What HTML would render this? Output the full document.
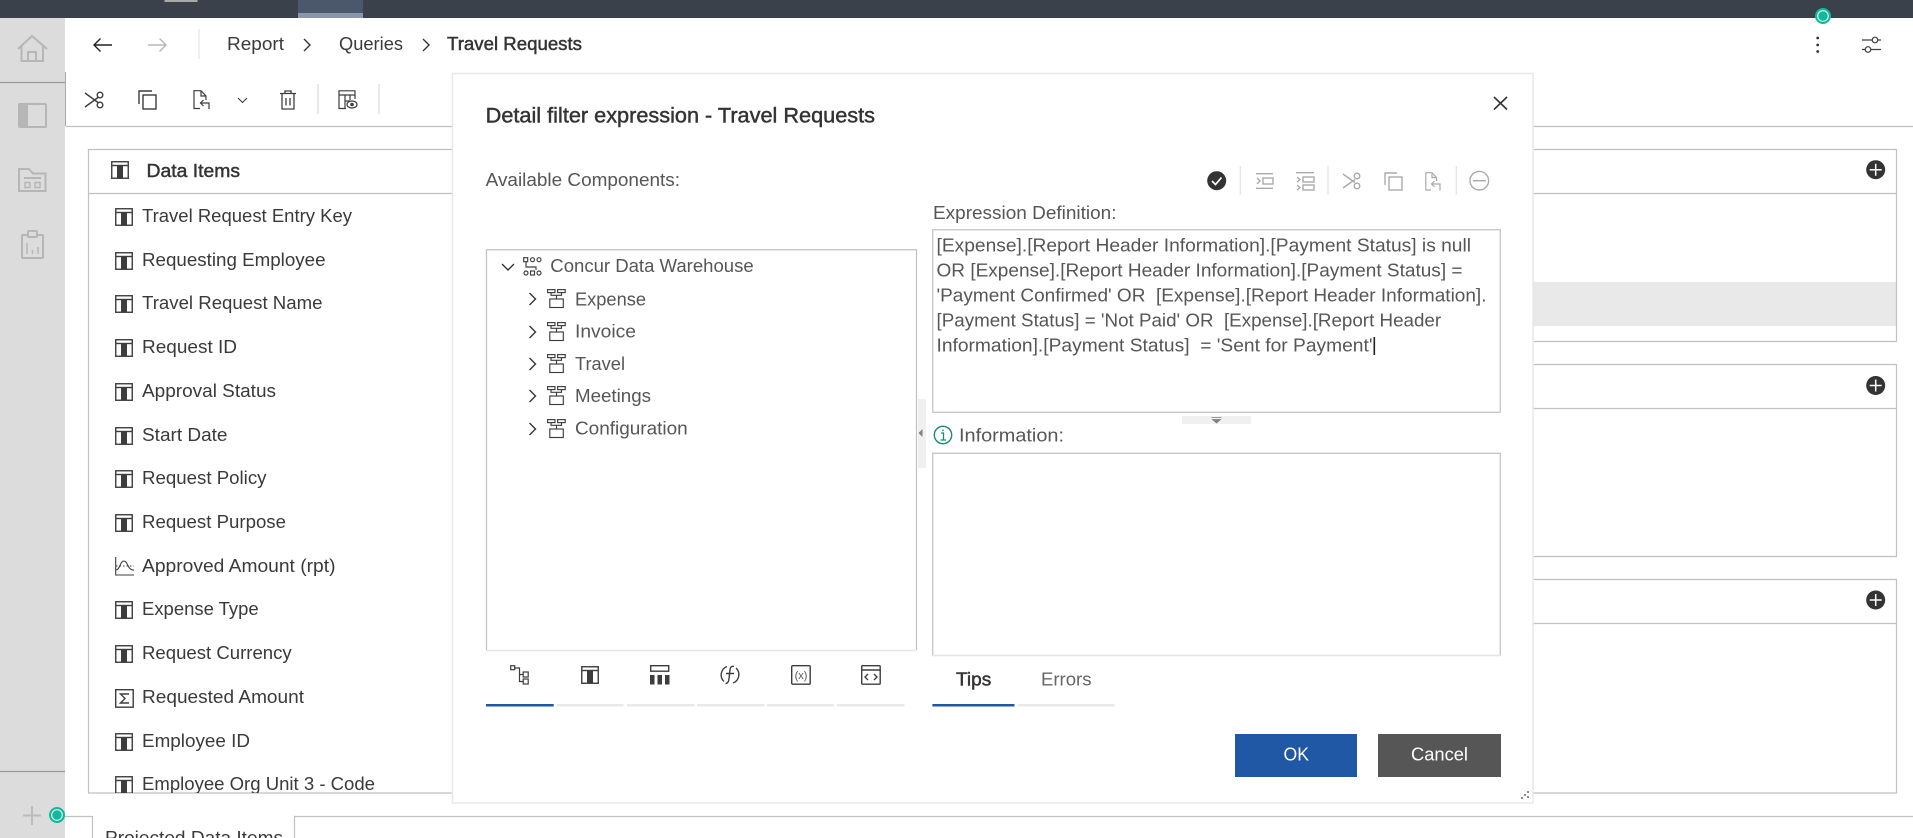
<!DOCTYPE html>
<html lang="en">
<head>
<meta charset="utf-8">
<title>Detail filter expression - Travel Requests</title>
<style>
html,body{margin:0;padding:0;background:#fff;width:1913px;height:838px;overflow:hidden}
svg{display:block}
text{font-family:"Liberation Sans",sans-serif;font-size:18px;white-space:pre}
.d{fill:#3a3a3a}
.g{fill:#565656}
.m{fill:#333;stroke:#333;stroke-width:.45px}
.s{fill:none;stroke:#3d3d3d;stroke-width:1.4}
.l{fill:none;stroke:#aaa;stroke-width:1.4}
.sb{fill:none;stroke:#b6b6b6;stroke-width:2}
</style>
</head>
<body>
<svg width="1913" height="838" viewBox="0 0 1913 838" xmlns="http://www.w3.org/2000/svg">
<defs>
<g id="tbl"><rect x=".75" y=".75" width="16.5" height="16.5" class="s"/><path d="M1 4.5H17" class="s"/><rect x="6" y="4.5" width="6" height="13" fill="#3d3d3d"/></g>
<g id="sub" class="s" style="stroke-width:1.15"><rect x=".6" y=".6" width="7.4" height="3"/><rect x="10.600" y=".6" width="7.6" height="3"/><path d="M4 3.600V6.300H14.500V3.600M9.500 6.300V10"/><rect x="2.800" y="10" width="13.500" height="8.500"/></g>
<g id="chev"><path d="M1 1L7 7 1 13" fill="none" stroke="#333" stroke-width="1.4"/></g>
<g id="plus"><circle cx="0" cy="0" r="9.5" fill="#333"/><path d="M-6 0H6M0-6V6" stroke="#fff" stroke-width="1.5"/></g>
</defs>

<!-- top bar -->
<rect x="0" y="0" width="1913" height="18" fill="#3a414b"/>
<rect x="298" y="0" width="65" height="13" fill="#4b576b"/>
<rect x="298" y="13" width="65" height="5" fill="#8a97ab"/>
<rect x="164.500" y="0" width="33" height="2" fill="#a9a9a9"/>

<!-- sidebar -->
<rect x="0" y="18" width="65" height="820" fill="#dcdcdc"/>
<path d="M0 82.500H65" stroke="#9a9a9a" stroke-width="1.200"/>
<path d="M0 771.500H65" stroke="#9a9a9a" stroke-width="1.200"/>
<path d="M65.500 72V126" stroke="#aaa" stroke-width="1"/>
<g class="sb">
<path d="M18 49L32 36 47 49M21.500 46V61H43V46M28 61V52H36V61"/>
<rect x="19" y="104" width="27" height="23" rx="1"/>
<path d="M19 191V169H29L33 173.500H45.500V191ZM24 178H41"/>
<path d="M25 182.500h5v5h-5zM35 182.500h5v5h-5z" style="stroke-width:1.5"/>
<rect x="22" y="235" width="21" height="23" rx="1"/>
<rect x="28" y="231" width="9" height="6" rx="1" fill="#dcdcdc"/>
<path d="M27 243V254M32.500 250V254M38 247V254" style="stroke-width:1.5"/>
</g>
<rect x="19" y="104" width="9" height="23" fill="#b6b6b6"/>
<path d="M23 815.500H41M32 806V825" stroke="#bcbcbc" stroke-width="2"/>

<!-- nav -->
<path d="M112 45H94M100.500 38.500L94 45 100.500 51.500" fill="none" stroke="#222" stroke-width="1.400"/>
<path d="M148 45H166M159.500 38.500L166 45 159.500 51.500" fill="none" stroke="#b5b5b5" stroke-width="1.400"/>
<path d="M199 29V59" stroke="#e4e4e4" stroke-width="1.200"/>
<text x="227" y="50" textLength="57" lengthAdjust="spacingAndGlyphs" class="d">Report</text>
<use href="#chev" x="303" y="38"/>
<text x="339" y="50" textLength="64" lengthAdjust="spacingAndGlyphs" class="d">Queries</text>
<use href="#chev" x="422" y="38"/>
<text x="447" y="50" textLength="135" lengthAdjust="spacingAndGlyphs" class="m">Travel Requests</text>

<circle cx="1817.700" cy="38" r="1.400" fill="#333"/><circle cx="1817.700" cy="45" r="1.400" fill="#333"/><circle cx="1817.700" cy="51.500" r="1.400" fill="#333"/>
<g class="s" style="stroke-width:1.200"><path d="M1862 40H1872M1878 40H1881M1862 49.500H1865M1871 49.500H1881"/><circle cx="1875" cy="40" r="2.800"/><circle cx="1868" cy="49.500" r="2.800"/></g>

<!-- toolbar -->
<g class="s" transform="translate(85,92)"><path d="M0 1L13 10.500M0 15L13 5.500"/><circle cx="15" cy="3" r="2.800"/><circle cx="15" cy="13" r="2.800"/></g>
<g class="s" transform="translate(138,90)"><path d="M1 14V1H14"/><rect x="5" y="5" width="13" height="14"/></g>
<g class="s" style="stroke-width:1.2" transform="translate(193,90)"><path d="M7 18.500H1V.7H8L13 6V10M8 1V6H13"/><path d="M16 19V13H7.500M10.500 10L7.500 13 10.500 16"/></g>
<path d="M238 98L242.500 102.500 247 98" class="s" style="stroke-width:1.100"/>
<g class="s" style="stroke-width:1.300" transform="translate(280,90)"><path d="M0 3.500H16M5 3.500V1H11V3.500"/><path d="M2 3.500V19H14V3.500M6 8V15.500M10 8V15.500"/></g>
<path d="M318 84V114M379 84V114" stroke="#e2e2e2" stroke-width="1.500"/>
<g class="s" style="stroke-width:1.200" transform="translate(338,90)"><path d="M8 18.500H1V.8H17V9M1 5H17M7 5V18.500M7 11H12M12 5V10"/><ellipse cx="14" cy="14.500" rx="5" ry="3.500"/><circle cx="14" cy="14.500" r="1.200" fill="#3d3d3d"/></g>
<path d="M66 126.500H1913" stroke="#c0c0c0" stroke-width="1.200"/>

<!-- left panel -->
<path d="M88.500 793V149.500H460M88.500 193.500H460M88 793H460" stroke="#c0c0c0" stroke-width="1.200" fill="none"/>
<use href="#tbl" x="111" y="161"/>
<text x="146.500" y="177" textLength="93.500" lengthAdjust="spacingAndGlyphs" class="m">Data Items</text>

<use href="#tbl" x="115" y="208"/><text x="142" y="222" textLength="210" lengthAdjust="spacingAndGlyphs" class="d">Travel Request Entry Key</text>
<use href="#tbl" x="115" y="252"/><text x="142" y="266" textLength="183.500" lengthAdjust="spacingAndGlyphs" class="d">Requesting Employee</text>
<use href="#tbl" x="115" y="295"/><text x="142" y="309" textLength="180.500" lengthAdjust="spacingAndGlyphs" class="d">Travel Request Name</text>
<use href="#tbl" x="115" y="339"/><text x="142" y="353" textLength="95" lengthAdjust="spacingAndGlyphs" class="d">Request ID</text>
<use href="#tbl" x="115" y="383"/><text x="142" y="397" textLength="134" lengthAdjust="spacingAndGlyphs" class="d">Approval Status</text>
<use href="#tbl" x="115" y="427"/><text x="142" y="441" textLength="85.500" lengthAdjust="spacingAndGlyphs" class="d">Start Date</text>
<use href="#tbl" x="115" y="470"/><text x="142" y="484" textLength="124.500" lengthAdjust="spacingAndGlyphs" class="d">Request Policy</text>
<use href="#tbl" x="115" y="514"/><text x="142" y="528" textLength="144" lengthAdjust="spacingAndGlyphs" class="d">Request Purpose</text>
<g class="s" style="stroke-width:1.100" transform="translate(115,557)"><path d="M.7 0V18H19"/><path d="M1 13C5 13 5 4 9 4S12 13 19 13"/><path d="M1 9H19" stroke-dasharray="1.500 2"/></g>
<text x="142" y="572" textLength="193.500" lengthAdjust="spacingAndGlyphs" class="d">Approved Amount (rpt)</text>
<use href="#tbl" x="115" y="601"/><text x="142" y="615" textLength="116.700" lengthAdjust="spacingAndGlyphs" class="d">Expense Type</text>
<use href="#tbl" x="115" y="645"/><text x="142" y="659" textLength="149.700" lengthAdjust="spacingAndGlyphs" class="d">Request Currency</text>
<g class="s" transform="translate(115,689)"><rect x=".7" y=".7" width="17.500" height="17.500"/><path d="M14 5H5.500L10 9.500 5.500 14H14"/></g>
<text x="142" y="703" textLength="162" lengthAdjust="spacingAndGlyphs" class="d">Requested Amount</text>
<use href="#tbl" x="115" y="733"/><text x="142" y="747" textLength="108" lengthAdjust="spacingAndGlyphs" class="d">Employee ID</text>
<svg x="100" y="760" width="350" height="33" viewBox="100 760 350 33"><use href="#tbl" x="115" y="776"/><text x="142" y="790" textLength="233" lengthAdjust="spacingAndGlyphs" class="d">Employee Org Unit 3 - Code</text></svg>

<!-- right panels -->
<rect x="1530" y="282" width="366" height="44" fill="#e9e9e9"/>
<g fill="none" stroke="#c0c0c0" stroke-width="1.200">
<path d="M1530 149.500H1896.500V341.500H1530M1530 193.500H1896.500"/>
<path d="M1530 364.500H1896.500V556.500H1530M1530 408.500H1896.500"/>
<path d="M1530 579.500H1896.500V793H1530M1530 623.500H1896.500"/>
</g>
<use href="#plus" x="1875.700" y="169.700"/>
<use href="#plus" x="1875.700" y="385.500"/>
<use href="#plus" x="1875.700" y="600"/>

<!-- bottom tab -->
<path d="M65 816.500H92.500V838M294.500 838V816.500H1913" fill="none" stroke="#c0c0c0" stroke-width="1.200"/>
<text x="105" y="844" textLength="178" lengthAdjust="spacingAndGlyphs" class="d">Projected Data Items</text>

<!-- green dots -->
<circle cx="1823" cy="16" r="8" fill="#10b99b"/><circle cx="1823" cy="16" r="5.300" fill="#10b99b" stroke="#d7f3ec" stroke-width="1.200"/>
<circle cx="57" cy="815" r="8" fill="#10b99b"/><circle cx="57" cy="815" r="5.300" fill="#10b99b" stroke="#d7f3ec" stroke-width="1.200"/>

<!-- modal -->
<rect x="452.500" y="73.500" width="1080.500" height="729.500" fill="#fff" stroke="#e8e8e8" stroke-width="1.500"/>
<text x="485.700" y="122.700" textLength="389.300" lengthAdjust="spacingAndGlyphs" style="font-size:21px" class="m">Detail filter expression - Travel Requests</text>
<path d="M1494 97L1507 109.500M1507 97L1494 109.500" stroke="#333" stroke-width="1.600"/>
<text x="485.700" y="186" textLength="194.300" lengthAdjust="spacingAndGlyphs" class="g">Available Components:</text>

<!-- modal toolbar -->
<circle cx="1216.700" cy="180.700" r="9.500" fill="#333"/>
<path d="M1212 181L1215.500 184.500 1221.500 177.500" fill="none" stroke="#fff" stroke-width="1.700"/>
<path d="M1240.300 166V195M1328 166V195M1456.300 166V195" stroke="#e3e3e3" stroke-width="1.200"/>
<g class="l" transform="translate(1256,173)"><path d="M0 .7H17M0 15.300H17"/><rect x="7" y="5" width="10" height="6"/><path d="M1 5L4 8 1 11"/></g>
<g class="l" transform="translate(1296,172)"><path d="M0 .7H18"/><rect x="7" y="5" width="11" height="5"/><rect x="7" y="13" width="11" height="5"/><path d="M1 5L4 7.500 1 10M1 13L4 15.500 1 18"/></g>
<g class="l" transform="translate(1343,173)"><path d="M0 1L12 9.500M0 15L12 6.500"/><circle cx="14" cy="3" r="2.800"/><circle cx="14" cy="13" r="2.800"/></g>
<g class="l" transform="translate(1384,172)"><path d="M1 13V1H13"/><rect x="5" y="5" width="13" height="13"/></g>
<g class="l" style="stroke-width:1.200" transform="translate(1425,172)"><path d="M6 18H.8V.7H7L11.500 5.500V9M7 1V5.500H11.500"/><path d="M15 18.500V12H6.500M9.500 9L6.500 12 9.500 15"/></g>
<circle cx="1479.300" cy="180.700" r="9.300" class="l"/><path d="M1473 180.700H1486" class="l"/>

<!-- tree -->
<path d="M486.500 650V249.750H916.500V650" fill="none" stroke="#c0c0c0" stroke-width="1.200"/>
<path d="M486 650.500H917" stroke="#e6e6e6" stroke-width="1.500"/>
<path d="M502 264L508 270 514 264" fill="none" stroke="#333" stroke-width="1.400"/>
<g class="s" style="stroke-width:1.150" transform="translate(523,257)"><rect x=".7" y=".7" width="4" height="4"/><circle cx="9.500" cy="2.700" r="2"/><circle cx="16" cy="2.700" r="2"/><path d="M3 5V10H13V13"/><circle cx="3" cy="16" r="2"/><rect x="7.500" y="14" width="4" height="4"/><circle cx="16" cy="16" r="2"/></g>
<text x="550.300" y="272" textLength="203.400" lengthAdjust="spacingAndGlyphs" class="g">Concur Data Warehouse</text>
<use href="#chev" x="528.500" y="292"/><use href="#sub" x="547" y="289"/><text x="575" y="305.300" textLength="71" lengthAdjust="spacingAndGlyphs" class="g">Expense</text>
<use href="#chev" x="528.500" y="325"/><use href="#sub" x="547" y="322"/><text x="575" y="337.300" textLength="61" lengthAdjust="spacingAndGlyphs" class="g">Invoice</text>
<use href="#chev" x="528.500" y="357"/><use href="#sub" x="547" y="354"/><text x="575" y="370" textLength="50" lengthAdjust="spacingAndGlyphs" class="g">Travel</text>
<use href="#chev" x="528.500" y="389"/><use href="#sub" x="547" y="386"/><text x="575" y="402" textLength="76" lengthAdjust="spacingAndGlyphs" class="g">Meetings</text>
<use href="#chev" x="528.500" y="422"/><use href="#sub" x="547" y="419"/><text x="575" y="434.300" textLength="112.700" lengthAdjust="spacingAndGlyphs" class="g">Configuration</text>

<!-- vertical splitter -->
<rect x="918" y="399" width="8" height="69" fill="#f0f0f0"/>
<path d="M922.500 429V437L918.500 433Z" fill="#808080"/>

<!-- expression -->
<text x="933" y="219" textLength="183.500" lengthAdjust="spacingAndGlyphs" class="g">Expression Definition:</text>
<rect x="932.750" y="229.750" width="567.500" height="182.500" fill="#fff" stroke="#c0c0c0" stroke-width="1.200"/>
<text x="936.500" y="251.700" textLength="534.500" lengthAdjust="spacingAndGlyphs" class="g">[Expense].[Report Header Information].[Payment Status] is null</text>
<text x="936.500" y="276.700" textLength="526" lengthAdjust="spacingAndGlyphs" class="g">OR [Expense].[Report Header Information].[Payment Status] =</text>
<text x="936.500" y="301.700" textLength="550" lengthAdjust="spacingAndGlyphs" class="g">'Payment Confirmed' OR  [Expense].[Report Header Information].</text>
<text x="936.500" y="326.700" textLength="504.600" lengthAdjust="spacingAndGlyphs" class="g">[Payment Status] = 'Not Paid' OR  [Expense].[Report Header</text>
<text x="936.500" y="351.700" textLength="436" lengthAdjust="spacingAndGlyphs" class="g">Information].[Payment Status]  = 'Sent for Payment'</text>
<rect x="1373.500" y="337" width="1.600" height="18" fill="#222"/>

<!-- horizontal splitter -->
<rect x="1182" y="416" width="69" height="8" fill="#f0f0f0"/>
<path d="M1211.500 417.500H1221.500M1212.500 419.500H1220.500L1216.500 423Z" fill="#808080" stroke="#808080" stroke-width=".8"/>

<!-- info -->
<circle cx="943" cy="435" r="8.700" fill="none" stroke="#1a8a6d" stroke-width="1.400"/>
<path d="M941 433H943.500V440M940.500 440H946M943 429.500V431.300" fill="none" stroke="#1a8a6d" stroke-width="1.300"/>
<text x="959" y="441.700" textLength="105" lengthAdjust="spacingAndGlyphs" class="g">Information:</text>
<path d="M932.750 655V453.250H1500.250V655" fill="none" stroke="#c0c0c0" stroke-width="1.200"/>
<path d="M932 655.500H1501" stroke="#e6e6e6" stroke-width="1.500"/>

<!-- left tabs -->
<g class="s" style="stroke-width:1.200" transform="translate(510,665)"><rect x=".7" y=".7" width="4" height="4"/><path d="M5 3H9.500V16.500H13M9.500 9.500H13"/><rect x="13.200" y="7" width="5" height="5"/><rect x="13.200" y="14" width="5" height="5"/></g>
<use href="#tbl" x="581" y="666"/>
<g transform="translate(650,665)"><rect x=".7" y=".7" width="18" height="5.500" fill="none" stroke="#3d3d3d" stroke-width="1.400"/><rect x="0" y="10" width="4.500" height="9.500" fill="#3d3d3d"/><rect x="7.500" y="10" width="4.500" height="9.500" fill="#3d3d3d"/><rect x="15" y="10" width="4.500" height="9.500" fill="#3d3d3d"/></g>
<g class="s" style="stroke-width:1.400" transform="translate(720,665)"><path d="M7 1.500A9 9 0 0 0 4 16.500"/><path d="M13 18A9 9 0 0 0 16 3"/><path d="M14 1.500C10 .5 10 4 9.500 9S9 18.500 5.500 18.500M6 8.500H14"/></g>
<g transform="translate(791,665)"><rect x=".7" y=".7" width="18.500" height="18.500" rx="1" class="s"/><text x="10" y="14" text-anchor="middle" style="font-size:11px" class="g">(x)</text></g>
<g class="s" transform="translate(861,665)"><rect x=".7" y=".7" width="18.500" height="18.500" rx="1"/><path d="M1 5H19M7 9L4 12 7 15M13 9L16 12 13 15"/></g>
<rect x="486" y="704" width="67.700" height="2.500" fill="#1f57a4"/>
<g fill="#e9e9e9"><rect x="557" y="704" width="66.500" height="2.500"/><rect x="627" y="704" width="67.500" height="2.500"/><rect x="697" y="704" width="67.500" height="2.500"/><rect x="767" y="704" width="67" height="2.500"/><rect x="837" y="704" width="67.500" height="2.500"/></g>

<!-- right tabs -->
<text x="956" y="685.700" textLength="35.300" lengthAdjust="spacingAndGlyphs" class="m">Tips</text>
<text x="1041" y="685.700" textLength="50.500" lengthAdjust="spacingAndGlyphs" fill="#666">Errors</text>
<rect x="932.400" y="704" width="82.100" height="2.500" fill="#1f57a4"/>
<rect x="1018" y="704" width="96.600" height="2.500" fill="#e9e9e9"/>

<!-- buttons -->
<rect x="1235" y="734" width="122" height="43" fill="#2058a5"/>
<text x="1283.500" y="760.700" textLength="25.500" lengthAdjust="spacingAndGlyphs" fill="#fff">OK</text>
<rect x="1378" y="734" width="123" height="43" fill="#565656"/>
<text x="1411" y="760.700" textLength="57" lengthAdjust="spacingAndGlyphs" fill="#fff">Cancel</text>

<!-- resize grip -->
<g fill="#8c8c8c"><rect x="1521" y="797" width="2" height="2"/><rect x="1524" y="794" width="2" height="2"/><rect x="1527" y="791" width="2" height="2"/><rect x="1527" y="796" width="2" height="2"/></g>
</svg>
</body>
</html>
